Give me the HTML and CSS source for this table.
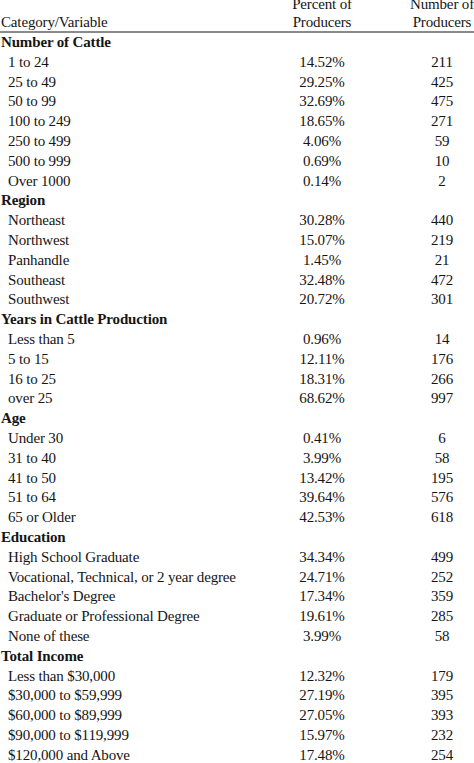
FILE: index.html
```html
<!DOCTYPE html>
<html>
<head>
<meta charset="utf-8">
<link rel="stylesheet" href="styles.css">
</head>
<body>
<div class="page">
<table class="data">
<thead>
<tr>
<th class="c1">Category/Variable</th>
<th class="c2">Percent of<br>Producers</th>
<th class="c3">Number of<br>Producers</th>
</tr>
</thead>
<tbody>
<tr class="cat"><td colspan="3">Number of Cattle</td></tr>
<tr><td class="c1">1 to 24</td><td class="c2">14.52%</td><td class="c3">211</td></tr>
<tr><td class="c1">25 to 49</td><td class="c2">29.25%</td><td class="c3">425</td></tr>
<tr><td class="c1">50 to 99</td><td class="c2">32.69%</td><td class="c3">475</td></tr>
<tr><td class="c1">100 to 249</td><td class="c2">18.65%</td><td class="c3">271</td></tr>
<tr><td class="c1">250 to 499</td><td class="c2">4.06%</td><td class="c3">59</td></tr>
<tr><td class="c1">500 to 999</td><td class="c2">0.69%</td><td class="c3">10</td></tr>
<tr><td class="c1">Over 1000</td><td class="c2">0.14%</td><td class="c3">2</td></tr>
<tr class="cat"><td colspan="3">Region</td></tr>
<tr><td class="c1">Northeast</td><td class="c2">30.28%</td><td class="c3">440</td></tr>
<tr><td class="c1">Northwest</td><td class="c2">15.07%</td><td class="c3">219</td></tr>
<tr><td class="c1">Panhandle</td><td class="c2">1.45%</td><td class="c3">21</td></tr>
<tr><td class="c1">Southeast</td><td class="c2">32.48%</td><td class="c3">472</td></tr>
<tr><td class="c1">Southwest</td><td class="c2">20.72%</td><td class="c3">301</td></tr>
<tr class="cat"><td colspan="3">Years in Cattle Production</td></tr>
<tr><td class="c1">Less than 5</td><td class="c2">0.96%</td><td class="c3">14</td></tr>
<tr><td class="c1">5 to 15</td><td class="c2">12.11%</td><td class="c3">176</td></tr>
<tr><td class="c1">16 to 25</td><td class="c2">18.31%</td><td class="c3">266</td></tr>
<tr><td class="c1">over 25</td><td class="c2">68.62%</td><td class="c3">997</td></tr>
<tr class="cat"><td colspan="3">Age</td></tr>
<tr><td class="c1">Under 30</td><td class="c2">0.41%</td><td class="c3">6</td></tr>
<tr><td class="c1">31 to 40</td><td class="c2">3.99%</td><td class="c3">58</td></tr>
<tr><td class="c1">41 to 50</td><td class="c2">13.42%</td><td class="c3">195</td></tr>
<tr><td class="c1">51 to 64</td><td class="c2">39.64%</td><td class="c3">576</td></tr>
<tr><td class="c1">65 or Older</td><td class="c2">42.53%</td><td class="c3">618</td></tr>
<tr class="cat"><td colspan="3">Education</td></tr>
<tr><td class="c1">High School Graduate</td><td class="c2">34.34%</td><td class="c3">499</td></tr>
<tr><td class="c1">Vocational, Technical, or 2 year degree</td><td class="c2">24.71%</td><td class="c3">252</td></tr>
<tr><td class="c1">Bachelor's Degree</td><td class="c2">17.34%</td><td class="c3">359</td></tr>
<tr><td class="c1">Graduate or Professional Degree</td><td class="c2">19.61%</td><td class="c3">285</td></tr>
<tr><td class="c1">None of these</td><td class="c2">3.99%</td><td class="c3">58</td></tr>
<tr class="cat"><td colspan="3">Total Income</td></tr>
<tr><td class="c1">Less than $30,000</td><td class="c2">12.32%</td><td class="c3">179</td></tr>
<tr><td class="c1">$30,000 to $59,999</td><td class="c2">27.19%</td><td class="c3">395</td></tr>
<tr><td class="c1">$60,000 to $89,999</td><td class="c2">27.05%</td><td class="c3">393</td></tr>
<tr><td class="c1">$90,000 to $119,999</td><td class="c2">15.97%</td><td class="c3">232</td></tr>
<tr><td class="c1">$120,000 and Above</td><td class="c2">17.48%</td><td class="c3">254</td></tr>
</tbody>
</table>
</div>
</body>
</html>
```
FILE: styles.css
```css
html, body {
  margin: 0;
  padding: 0;
  background: #fff;
  overflow: hidden;
}
.page {
  width: 474px;
  height: 763px;
  overflow: hidden;
}
.data {
  border-collapse: collapse;
  table-layout: fixed;
  width: 498px;
  margin-top: -5px;
  font-family: "Liberation Serif", "Times New Roman", serif;
  font-size: 15px;
  letter-spacing: -0.15px;
  color: #151515;
}
.data th {
  font-weight: normal;
  line-height: 18px;
  padding: 0;
  vertical-align: bottom;
  border-bottom: 2px solid #8a8a8a;
}
.data th.c1 { text-align: left; width: 258px; padding-left: 1px; }
.data th.c2 { text-align: center; width: 126px; }
.data th.c3 { text-align: center; width: 114px; }
.data td {
  padding: 0;
  height: 19.8px;
  line-height: 19.8px;
  white-space: nowrap;
}
.data td.c1 { padding-left: 8px; }
.data td.c2 { text-align: center; }
.data td.c3 { text-align: center; }
.data tr.cat td { font-weight: bold; padding-left: 1px; }
```
